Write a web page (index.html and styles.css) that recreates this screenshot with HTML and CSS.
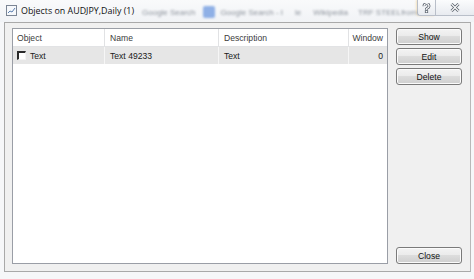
FILE: index.html
```html
<!DOCTYPE html>
<html lang="en">
<head>
    <meta charset="UTF-8">
    <title>Objects on AUDJPY,Daily (1)</title>
    <link rel="stylesheet" href="styles.css">
</head>
<body>

    <div class="window">
        <div class="titlebar">
            <svg class="app-icon" width="11" height="11" viewBox="0 0 11 11">
                <rect x="0.5" y="0.5" width="10" height="10" fill="#f6f8fb" stroke="#7b8594"/>
                <polyline points="2,8 4,6 6,7 9,3" fill="none" stroke="#5a7fb0" stroke-width="1"/>
            </svg>
            <span class="title">Objects on AUDJPY,Daily (1)</span>
            <!-- blurred stuff behind the glass frame -->
            <div class="behind">
                <span class="b1">Google Search</span>
                <span class="blue-sq"></span>
                <span class="b2">Google Search - I</span>
                <span class="b3">le</span>
                <span class="b4">Wikipedia</span>
                <span class="b5">TRF STEELfrom</span>
            </div>
            <div class="caption-btns">
                <div class="cap-btn help">
                    <svg width="9" height="10" viewBox="0 0 9 10">
                        <path d="M2 3.2 A2.5 2.3 0 1 1 5.2 5.2 L4.5 5.8 L4.5 6.8" fill="none" stroke="#59616c" stroke-width="2.8"/>
                        <path d="M2 3.2 A2.5 2.3 0 1 1 5.2 5.2 L4.5 5.8 L4.5 6.8" fill="none" stroke="#fff" stroke-width="1.2"/>
                        <rect x="3.3" y="7.6" width="2.4" height="2.2" fill="#fff" stroke="#59616c" stroke-width="0.8"/>
                    </svg>
                </div>
                <div class="cap-btn close">
                    <svg width="10" height="9" viewBox="0 0 10 9">
                        <path d="M1.5 1 L8.5 8 M8.5 1 L1.5 8" stroke="#59616c" stroke-width="2.8"/>
                        <path d="M1.5 1 L8.5 8 M8.5 1 L1.5 8" stroke="#fff" stroke-width="1.1"/>
                    </svg>
                </div>
            </div>
        </div>

        <div class="client">
            <div class="list">
                <div class="list-row list-head">
                    <div class="cell first">Object</div>
                    <div class="cell">Name</div>
                    <div class="cell">Description</div>
                    <div class="cell num">Window</div>
                </div>
                <div class="list-row selected">
                    <div class="cell first"><span class="check"></span>Text</div>
                    <div class="cell">Text 49233</div>
                    <div class="cell">Text</div>
                    <div class="cell num">0</div>
                </div>
            </div>
            <div class="side">
                <button class="btn">Show</button>
                <button class="btn">Edit</button>
                <button class="btn">Delete</button>
                <button class="btn close-btn">Close</button>
            </div>
        </div>
    </div>

</body>
</html>
```

FILE: styles.css
```css
body {
    margin: 0;
    width: 474px;
    height: 279px;
    overflow: hidden;
    background-color: #f6f7f9;
    font-family: "Liberation Sans", Arial, sans-serif;
}
.window {
    width: 474px;
    height: 279px;
}
.titlebar {
    display: flex;
    align-items: flex-start;
    height: 22px;
    background: linear-gradient(#f9fafb, #f1f3f6);
}
.app-icon {
    margin: 5px 0 0 6px;
    flex-shrink: 0;
}
.title {
    margin: 4px 0 0 4px;
    font-family: "Open Sans", "Noto Sans", sans-serif;
    font-size: 8.9px;
    line-height: 13px;
    color: #111;
    white-space: nowrap;
}
.behind {
    display: flex;
    align-items: center;
    margin: 6px 0 0 8px;
    height: 12px;
    color: #8e949d;
    font-size: 8px;
    white-space: nowrap;
    filter: blur(1px);
}
.behind .blue-sq {
    width: 12px;
    height: 12px;
    margin: 0 5px 0 8px;
    border-radius: 2px;
    background-color: #8fb0e6;
}
.behind .b3 {
    margin-left: 12px;
}
.behind .b4 {
    margin-left: 12px;
}
.behind .b5 {
    margin-left: 10px;
}
.caption-btns {
    display: flex;
    margin-left: auto;
}
.cap-btn {
    height: 16px;
    display: flex;
    align-items: center;
    justify-content: center;
    box-sizing: border-box;
    border: 1px solid #b9bfc9;
    border-top: none;
    background: linear-gradient(#fbfcfd, #e8ebf0);
}
.cap-btn.help {
    width: 18px;
    border-right: none;
    border-bottom-left-radius: 3px;
    box-shadow: -1px 0 2px rgba(240, 200, 120, 0.45);
}
.cap-btn.close {
    width: 40px;
    border-right: none;
    padding-right: 2px;
}
.client {
    display: flex;
    gap: 8px;
    box-sizing: border-box;
    width: 467px;
    height: 250px;
    margin-left: 4px;
    padding: 5px 8px 7px 7px;
    border: 1px solid #a9a9a9;
    border-right-color: #b8b8b8;
    background-color: #f0f0f0;
}
.list {
    box-sizing: border-box;
    width: 376px;
    height: 236px;
    border: 1px solid #9a9ea6;
    background-color: #ffffff;
    font-size: 8.6px;
    color: #1a1a1a;
}
.list-row {
    display: grid;
    grid-template-columns: 91px 114px 130px 1fr;
    height: 17px;
}
.list-head {
    border-bottom: 1px solid #e2e3e5;
    color: #3b3b3b;
}
.cell {
    display: flex;
    align-items: center;
    padding: 0 5px;
    border-left: 1px solid #e1e2e4;
    white-space: nowrap;
    overflow: hidden;
}
.cell.first {
    border-left: none;
    padding-left: 4px;
}
.cell.num {
    justify-content: flex-end;
    padding-right: 4px;
}
.selected {
    background-color: #e6e6e6;
}
.selected .cell {
    border-left-color: #f6f6f6;
}
.check {
    box-sizing: border-box;
    width: 9px;
    height: 9px;
    margin: 0 4px 0 0;
    border-top: 2px solid #2a2a2a;
    border-left: 2px solid #2a2a2a;
    border-right: 1px solid #f4f4f4;
    border-bottom: 1px solid #f4f4f4;
    background-color: #ffffff;
}
.side {
    display: flex;
    flex-direction: column;
    gap: 3px;
    width: 66px;
}
.btn {
    height: 17px;
    padding: 0;
    border: 1px solid #7a7a7a;
    border-radius: 3px;
    background: linear-gradient(#f3f3f3 0%, #ebebeb 45%, #dcdcdc 50%, #cfcfcf 100%);
    box-shadow: inset 0 0 0 1px #fbfbfb;
    font-family: "Liberation Sans", Arial, sans-serif;
    font-size: 8.6px;
    color: #111;
}
.close-btn {
    margin-top: auto;
}
```
